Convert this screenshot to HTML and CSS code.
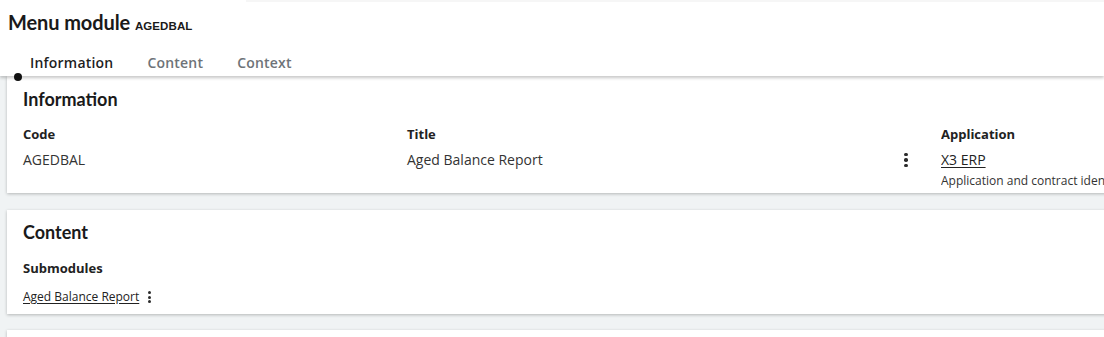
FILE: index.html
```html
<!DOCTYPE html>
<html>
<head>
<meta charset="utf-8">
<link rel="stylesheet" href="styles.css">
</head>
<body>
<div class="page">
  <header class="header">
    <div class="topstrip"></div>
    <h1 class="title">Menu module <span class="code">AGEDBAL</span></h1>
    <nav class="tabs">
      <span class="tab active">Information</span>
      <span class="tab">Content</span>
      <span class="tab">Context</span>
    </nav>
    <span class="dot"></span>
  </header>
  <main class="main">
    <section class="card card-info">
      <h2 class="card-title">Information</h2>
      <div class="fields">
        <div class="field">
          <div class="label">Code</div>
          <div class="value">AGEDBAL</div>
        </div>
        <div class="field field-title">
          <div class="label">Title</div>
          <div class="value-row">
            <span class="value">Aged Balance Report</span>
            <span class="kebab"><i></i><i></i><i></i></span>
          </div>
        </div>
        <div class="field field-app">
          <div class="label">Application</div>
          <div class="value"><a class="link" href="#">X3 ERP</a></div>
          <div class="help">Application and contract identifier</div>
        </div>
      </div>
    </section>
    <section class="card card-content">
      <h2 class="card-title">Content</h2>
      <div class="label sub-label">Submodules</div>
      <div class="sub-row">
        <a class="link small" href="#">Aged Balance Report</a>
        <span class="kebab small-kebab"><i></i><i></i><i></i></span>
      </div>
    </section>
    <section class="card card-context"></section>
  </main>
</div>
</body>
</html>
```
FILE: styles.css
```css
html, body {
  margin: 0;
  padding: 0;
}
body {
  background: #f0f3f4;
  font-family: "Open Sans", "Liberation Sans", sans-serif;
  color: #1f1f1f;
  overflow: hidden;
  width: 1104px;
  height: 337px;
}
.page {
  position: relative;
  height: 337px;
  overflow: hidden;
}
.header {
  position: relative;
  z-index: 2;
  background: #ffffff;
  height: 76px;
  box-shadow: 0 2px 3px rgba(0, 0, 0, 0.22);
  padding: 0 8px;
  box-sizing: border-box;
}
.topstrip {
  position: absolute;
  top: 0;
  left: 246px;
  right: 0;
  height: 2px;
  background: #f6f6f6;
}
.title {
  margin: 0;
  padding-top: 8px;
  height: 28px;
  line-height: 28px;
  font-family: Lato, "Open Sans", sans-serif;
  font-weight: 700;
  font-size: 20px;
  color: #1a1a1a;
  letter-spacing: -0.1px;
}
.title .code {
  font-family: "Liberation Sans", Arial, sans-serif;
  font-size: 11.5px;
  font-weight: 700;
  letter-spacing: 0.1px;
}
.tabs {
  display: flex;
  gap: 34px;
  margin-top: 12px;
  padding-left: 22px;
  height: 28px;
  align-items: center;
}
.tab {
  font-size: 14px;
  font-weight: 600;
  color: #6e7378;
  letter-spacing: 0.2px;
}
.tab.active {
  color: #1f1f1f;
}
.dot {
  position: absolute;
  left: 14px;
  top: 73px;
  width: 8px;
  height: 8px;
  border-radius: 50%;
  background: #111;
}
.main {
  padding-left: 7px;
}
.card {
  position: relative;
  background: #fff;
  margin-right: -30px;
  box-shadow: 0 1px 3px rgba(0, 0, 0, 0.25);
  padding: 0 16px;
}
.card-info {
  padding-top: 12px;
  padding-bottom: 4px;
}
.card-content {
  margin-top: 17px;
  padding-top: 11px;
  padding-bottom: 8px;
}
.card-context {
  margin-top: 16px;
  height: 20px;
}
.card-title {
  margin: 0;
  font-family: Lato, "Open Sans", sans-serif;
  font-size: 18px;
  font-weight: 700;
  line-height: 22px;
  color: #1a1a1a;
}
.fields {
  display: grid;
  grid-template-columns: 384px 534px 1fr;
  margin-top: 15px;
}
.field-app {
  overflow: hidden;
}
.label {
  font-size: 13px;
  font-weight: 700;
  line-height: 18px;
  color: #222;
}
.value {
  margin-top: 7px;
  font-size: 14px;
  line-height: 20px;
  color: #333;
}
.value-row {
  display: flex;
  align-items: center;
  justify-content: space-between;
  padding-right: 32px;
  margin-top: 7px;
}
.value-row .value {
  margin-top: 0;
}
.help {
  margin-top: 3px;
  font-size: 12px;
  line-height: 16px;
  color: #333;
  white-space: nowrap;
}
.link {
  color: #222;
  text-decoration: underline;
  text-underline-offset: 2px;
}
.kebab {
  display: inline-flex;
  flex-direction: column;
  align-items: center;
  gap: 2px;
  width: 6px;
}
.kebab i {
  display: block;
  width: 3.5px;
  height: 3.5px;
  border-radius: 50%;
  background: #2b2b2b;
}
.sub-label {
  margin-top: 16px;
}
.sub-row {
  display: flex;
  align-items: center;
  gap: 7px;
  margin-top: 11px;
  height: 18px;
}
.link.small {
  font-size: 12px;
  line-height: 18px;
}
.small-kebab {
  gap: 1.5px;
}
.small-kebab i {
  width: 3px;
  height: 3px;
}
```
